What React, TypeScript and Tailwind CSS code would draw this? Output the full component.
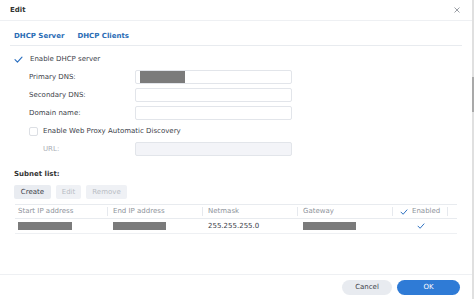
import React from "react";

const font = { fontFamily: '"DejaVu Sans", Verdana, sans-serif' };

function Check({ className = "" }: { className?: string }) {
  return (
    <svg viewBox="0 0 10 8" className={className} fill="none">
      <path d="M1 4.2 L3.8 7 L9 1.2" stroke="#2a6fc0" strokeWidth="1.3" strokeLinecap="round" strokeLinejoin="round" />
    </svg>
  );
}

function Field({ label, children, indent = false, muted = false }: { label: string; children: React.ReactNode; indent?: boolean; muted?: boolean }) {
  return (
    <div className="flex h-[18px] items-center">
      <span className={`${indent ? "w-[121px] pl-[29px]" : "w-[121px] pl-[15px]"} ${muted ? "text-[#a9adb4]" : "text-[#3c4149]"}`}>
        {label}
      </span>
      {children}
    </div>
  );
}

function Input({ disabled = false, children }: { disabled?: boolean; children?: React.ReactNode }) {
  return (
    <div
      className={`flex h-[14px] w-[157px] items-center rounded-[2px] border border-[#e2e5ea] pl-[4px] ${
        disabled ? "bg-[#f3f4f8]" : "bg-white"
      }`}
    >
      {children}
    </div>
  );
}

const Redact = ({ w }: { w: string }) => <div className={`h-[8px] bg-[#7b7b7b] ${w}`} />;

export default function App() {
  return (
    <div className="flex h-[299px] w-[474px] overflow-hidden bg-white text-[7px] text-[#3c4149]" style={font}>
      <div className="flex min-w-0 flex-1 flex-col">
        {/* title bar */}
        <div className="flex h-[21px] items-center justify-between border-b border-[#eef0f3] pl-[10px] pr-[12px]">
          <span className="font-bold text-[#333]">Edit</span>
          <svg viewBox="0 0 6 6" className="h-[6px] w-[6px]">
            <path d="M0.5 0.5 L5.5 5.5 M5.5 0.5 L0.5 5.5" stroke="#9a9ea5" strokeWidth="1" />
          </svg>
        </div>

        {/* tabs */}
        <div className="mx-[10px] flex h-[25px] items-end gap-[13px] border-b border-[#e8ebef] pb-[4px] pl-[4px] font-bold text-[#2a6cb5]">
          <span>DHCP Server</span>
          <span>DHCP Clients</span>
        </div>

        {/* form */}
        <div className="flex flex-1 flex-col px-[14px] pt-[4px]">
          <div className="flex h-[18px] items-center gap-[7px]">
            <Check className="h-[7px] w-[9px]" />
            <span>Enable DHCP server</span>
          </div>
          <Field label="Primary DNS:">
            <Input>
              <div className="h-[12px] w-[45px] bg-[#7b7b7b]" />
            </Input>
          </Field>
          <Field label="Secondary DNS:">
            <Input />
          </Field>
          <Field label="Domain name:">
            <Input />
          </Field>
          <div className="flex h-[18px] items-center gap-[5px] pl-[15px]">
            <div className="h-[9px] w-[9px] rounded-[2px] border border-[#dcdfe4] bg-white" />
            <span>Enable Web Proxy Automatic Discovery</span>
          </div>
          <Field label="URL:" indent muted>
            <Input disabled />
          </Field>

          <div className="mt-[9px] flex h-[14px] items-center font-bold text-[#333]">Subnet list:</div>

          <div className="mt-[4px] flex gap-[5px]">
            <div className="flex h-[14px] w-[37px] items-center justify-center rounded-[2px] bg-[#e9ecf1] text-[#3c4149]">Create</div>
            <div className="flex h-[14px] w-[25px] items-center justify-center rounded-[2px] bg-[#eff1f5] text-[#b9bdc4]">Edit</div>
            <div className="flex h-[14px] w-[41px] items-center justify-center rounded-[2px] bg-[#eff1f5] text-[#b9bdc4]">Remove</div>
          </div>

          {/* table */}
          <div className="ml-[1px] mr-[1px] mt-[5px]">
            <div className="flex h-[15px] items-center border-y border-[#e8ebef] text-[#8e939b]">
              <div className="flex h-[9px] w-[93px] items-center border-r border-[#e6e9ee] pl-[3px]">Start IP address</div>
              <div className="flex h-[9px] w-[95px] items-center border-r border-[#e6e9ee] pl-[5px]">End IP address</div>
              <div className="flex h-[9px] w-[95px] items-center border-r border-[#e6e9ee] pl-[5px]">Netmask</div>
              <div className="flex h-[9px] w-[95px] items-center border-r border-[#e6e9ee] pl-[5px]">Gateway</div>
              <div className="flex h-[9px] w-[55px] items-center gap-[4px] border-r border-[#e6e9ee] pl-[7px]">
                <Check className="h-[6px] w-[8px]" />
                <span>Enabled</span>
              </div>
            </div>
            <div className="flex h-[15px] items-center border-b border-[#eef0f3]">
              <div className="w-[93px] pl-[3px]">
                <Redact w="w-[54px]" />
              </div>
              <div className="w-[95px] pl-[5px]">
                <Redact w="w-[53px]" />
              </div>
              <div className="w-[95px] pl-[5px] text-[#3c4149]">255.255.255.0</div>
              <div className="w-[95px] pl-[5px]">
                <Redact w="w-[53px]" />
              </div>
              <div className="flex w-[55px] justify-center">
                <Check className="h-[6px] w-[8px]" />
              </div>
            </div>
          </div>
        </div>

        {/* footer */}
        <div className="flex h-[25px] items-center justify-end gap-[5px] border-t border-[#eef0f3] pr-[12px] pt-[1px]">
          <div className="flex h-[15px] w-[50px] items-center justify-center rounded-full bg-[#e8ebf0] text-[#3c4149]">Cancel</div>
          <div className="flex h-[15px] w-[63px] items-center justify-center rounded-full bg-[#2f7bd6] text-white">OK</div>
        </div>
      </div>

      {/* scrollbar */}
      <div className="flex w-[2px] flex-col bg-[#e0e0e0]">
        <div className="h-[77px]" />
        <div className="h-[35px] bg-[#a9a9a9]" />
      </div>
    </div>
  );
}
